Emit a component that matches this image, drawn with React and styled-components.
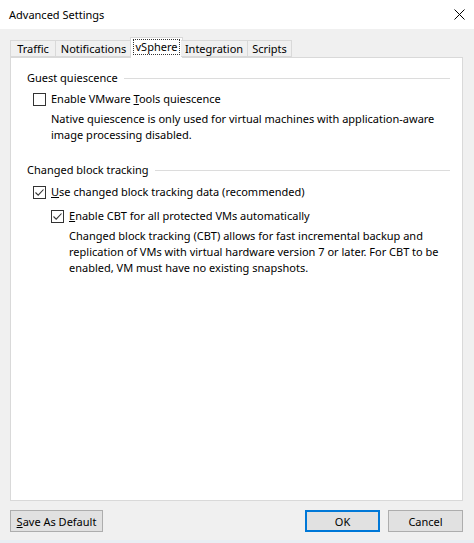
import React from "react";
import styled, { createGlobalStyle } from "styled-components";

const GlobalStyle = createGlobalStyle`
  html, body { margin: 0; padding: 0; background: #f0f0f0; }
  body { font-family: "Noto Sans", "Segoe UI", sans-serif; font-size: 11px; color: #000; }
`;

const Window = styled.div`
  width: 474px;
  height: 543px;
  display: flex;
  flex-direction: column;
  background: #f0f0f0;
  box-sizing: border-box;
  border-bottom: 3px solid #e9eef3;
`;

const TitleBar = styled.div`
  height: 29px;
  flex: none;
  background: #fff;
  display: flex;
  align-items: center;
  justify-content: space-between;
  padding: 0 9px 0 9px;
  font-size: 11px;
`;

const CloseButton = styled.div`
  width: 12px;
  height: 12px;
  display: flex;
  align-items: center;
  justify-content: center;
`;

const Body = styled.div`
  flex: 1;
  display: flex;
  flex-direction: column;
  padding: 9px 11px 0 10px;
`;

const TabStrip = styled.div`
  display: flex;
  align-items: flex-end;
  height: 19px;
  position: relative;
  z-index: 1;
`;

const Tab = styled.div`
  box-sizing: border-box;
  width: ${(p) => p.$w}px;
  height: ${(p) => (p.$active ? 21 : 17)}px;
  margin: 0 ${(p) => (p.$active ? -2 : 0)}px ${(p) => (p.$active ? -1 : 0)}px;
  border: 1px solid #d9d9d9;
  border-bottom: ${(p) => (p.$active ? "none" : "1px solid #d9d9d9")};
  border-left: ${(p) => (p.$first || p.$active ? "1px solid #d9d9d9" : "none")};
  background: ${(p) => (p.$active ? "#fff" : "#f0f0f0")};
  display: flex;
  align-items: center;
  justify-content: center;
  padding: ${(p) => (p.$active ? "1px 2px 3px" : "0")};
  line-height: 14px;
  white-space: nowrap;
`;

const FocusLabel = styled.span`
  flex: 1;
  align-self: stretch;
  display: flex;
  align-items: center;
  justify-content: center;
  border: 1px dotted #333;
`;

const Panel = styled.div`
  height: 444px;
  box-sizing: border-box;
  background: #fff;
  border: 1px solid #d9d9d9;
  padding: 12px 12px 0 16px;
  display: flex;
  flex-direction: column;
  white-space: nowrap;
`;

const GroupHeader = styled.div`
  display: flex;
  align-items: center;
  gap: 6px;
  line-height: 16px;
  margin-top: ${(p) => p.$mt || 0}px;
  &::after {
    content: "";
    flex: 1;
    height: 1px;
    background: #dcdcdc;
  }
`;

const CheckRow = styled.div`
  display: flex;
  align-items: center;
  gap: 5px;
  line-height: 16px;
  margin-top: ${(p) => p.$mt || 0}px;
  margin-left: ${(p) => p.$indent || 0}px;
`;

const Box = styled.span`
  width: 13px;
  height: 13px;
  box-sizing: border-box;
  border: 1px solid #333;
  background: #fff;
  display: flex;
  align-items: center;
  justify-content: center;
  flex: none;
`;

const Desc = styled.div`
  line-height: 16px;
  margin-top: ${(p) => p.$mt || 0}px;
  margin-left: ${(p) => p.$indent || 0}px;
`;

const Footer = styled.div`
  display: flex;
  align-items: center;
  padding-top: 9px;
  gap: 8px;
`;

const Spacer = styled.div`
  flex: 1;
`;

const Button = styled.button`
  font-family: inherit;
  font-size: 11px;
  color: #000;
  height: 22px;
  width: ${(p) => p.$w}px;
  box-sizing: border-box;
  background: #e1e1e1;
  border: 1px solid ${(p) => (p.$primary ? "#0078d7" : "#adadad")};
  box-shadow: ${(p) => (p.$primary ? "inset 0 0 0 1px #0078d7" : "none")};
  padding: 0;
  display: flex;
  align-items: center;
  justify-content: center;
`;

function Check({ checked }) {
  return (
    <Box>
      {checked && (
        <svg width="11" height="11" viewBox="0 0 11 11">
          <path d="M1.5 5.5 L4.2 8.2 L9.5 2.5" fill="none" stroke="#333" strokeWidth="1.1" />
        </svg>
      )}
    </Box>
  );
}

export default function App() {
  return (
    <>
      <GlobalStyle />
      <Window>
        <TitleBar>
          <span>Advanced Settings</span>
          <CloseButton>
            <svg width="11" height="11" viewBox="0 0 11 11">
              <path d="M0.5 0.5 L10.5 10.5 M10.5 0.5 L0.5 10.5" stroke="#000" strokeWidth="1" />
            </svg>
          </CloseButton>
        </TitleBar>
        <Body>
          <TabStrip>
            <Tab $w={46} $first>Traffic</Tab>
            <Tab $w={76}>Notifications</Tab>
            <Tab $w={53} $active>
              <FocusLabel>vSphere</FocusLabel>
            </Tab>
            <Tab $w={67}>Integration</Tab>
            <Tab $w={44}>Scripts</Tab>
          </TabStrip>
          <Panel>
            <GroupHeader>Guest quiescence</GroupHeader>
            <CheckRow $mt={5} $indent={6}>
              <Check />
              <span>
                Enable VMware <u>T</u>ools quiescence
              </span>
            </CheckRow>
            <Desc $mt={4} $indent={24}>
              Native quiescence is only used for virtual machines with application-aware
              <br />
              image processing disabled.
            </Desc>
            <GroupHeader $mt={19}>Changed block tracking</GroupHeader>
            <CheckRow $mt={6} $indent={6}>
              <Check checked />
              <span>
                <u>U</u>se changed block tracking data (recommended)
              </span>
            </CheckRow>
            <CheckRow $mt={8} $indent={24}>
              <Check checked />
              <span>
                <u>E</u>nable CBT for all protected VMs automatically
              </span>
            </CheckRow>
            <Desc $mt={4} $indent={42}>
              Changed block tracking (CBT) allows for fast incremental backup and
              <br />
              replication of VMs with virtual hardware version 7 or later. For CBT to be
              <br />
              enabled, VM must have no existing snapshots.
            </Desc>
          </Panel>
          <Footer>
            <Button $w={93}>
              <span>
                <u>S</u>ave As Default
              </span>
            </Button>
            <Spacer />
            <Button $w={75} $primary>OK</Button>
            <Button $w={75}>Cancel</Button>
          </Footer>
        </Body>
      </Window>
    </>
  );
}
